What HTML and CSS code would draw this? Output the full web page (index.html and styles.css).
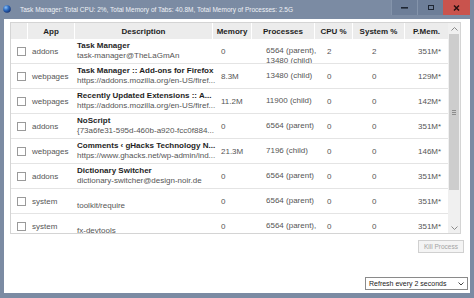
FILE: index.html
```html
<!DOCTYPE html>
<html>
<head>
<meta charset="utf-8">
<link rel="stylesheet" href="styles.css">
</head>
<body>
<div class="window">
  <div class="titlebar">
    <svg class="app-icon" width="8" height="8" viewBox="0 0 8 8">
      <defs>
        <radialGradient id="g" cx="35%" cy="30%" r="70%">
          <stop offset="0" stop-color="#8fc0f5"/>
          <stop offset="0.5" stop-color="#2f6fc4"/>
          <stop offset="1" stop-color="#16367a"/>
        </radialGradient>
      </defs>
      <circle cx="4" cy="4" r="3.8" fill="url(#g)"/>
    </svg>
    <span class="title">Task Manager: Total CPU: 2%, Total Memory of Tabs: 40.8M, Total Memory of Processes: 2.5G</span>
    <div class="controls">
      <div class="ctl"><svg width="7" height="2" viewBox="0 0 7 2"><rect x="0" y="0" width="7" height="1.6" fill="#1e2633"/></svg></div>
      <div class="ctl"><svg width="6" height="5" viewBox="0 0 6 5"><rect x="0.5" y="0.5" width="5" height="4" fill="none" stroke="#1e2633" stroke-width="1"/></svg></div>
      <div class="ctl close"><svg width="7" height="6" viewBox="0 0 7 6"><path d="M1 0.5 L6 5.5 M6 0.5 L1 5.5" stroke="#2a1010" stroke-width="1.5"/></svg></div>
    </div>
  </div>
  <div class="client">
    <div class="table">
      <div class="grid-area">
        <div class="head">
          <div class="hc"></div>
          <div class="hc">App</div>
          <div class="hc">Description</div>
          <div class="hc">Memory</div>
          <div class="hc">Processes</div>
          <div class="hc">CPU %</div>
          <div class="hc">System %</div>
          <div class="hc last">P.Mem.</div>
        </div>
        <div class="rows">
          <div class="row">
            <div class="c-chk"><span class="box"></span></div>
            <div class="c-app">addons</div>
            <div class="c-desc"><div class="t">Task Manager</div><div class="s">task-manager@TheLaGmAn</div></div>
            <div class="c-mem">0</div>
            <div class="c-proc"><div class="pin">6564 (parent),<br>13480 (child)</div></div>
            <div class="c-cpu">2</div>
            <div class="c-sys">2</div>
            <div class="c-pm">351M*</div>
          </div>
          <div class="row">
            <div class="c-chk"><span class="box"></span></div>
            <div class="c-app">webpages</div>
            <div class="c-desc"><div class="t">Task Manager :: Add-ons for Firefox</div><div class="s">https://addons.mozilla.org/en-US/firef...</div></div>
            <div class="c-mem">8.3M</div>
            <div class="c-proc"><div class="pin">13480 (child)</div></div>
            <div class="c-cpu">0</div>
            <div class="c-sys">0</div>
            <div class="c-pm">129M*</div>
          </div>
          <div class="row">
            <div class="c-chk"><span class="box"></span></div>
            <div class="c-app">webpages</div>
            <div class="c-desc"><div class="t">Recently Updated Extensions :: A...</div><div class="s">https://addons.mozilla.org/en-US/firef...</div></div>
            <div class="c-mem">11.2M</div>
            <div class="c-proc"><div class="pin">11900 (child)</div></div>
            <div class="c-cpu">0</div>
            <div class="c-sys">0</div>
            <div class="c-pm">142M*</div>
          </div>
          <div class="row">
            <div class="c-chk"><span class="box"></span></div>
            <div class="c-app">addons</div>
            <div class="c-desc"><div class="t">NoScript</div><div class="s">{73a6fe31-595d-460b-a920-fcc0f884...</div></div>
            <div class="c-mem">0</div>
            <div class="c-proc"><div class="pin">6564 (parent)</div></div>
            <div class="c-cpu">0</div>
            <div class="c-sys">0</div>
            <div class="c-pm">351M*</div>
          </div>
          <div class="row">
            <div class="c-chk"><span class="box"></span></div>
            <div class="c-app">webpages</div>
            <div class="c-desc"><div class="t">Comments ‹ gHacks Technology N...</div><div class="s">https://www.ghacks.net/wp-admin/ind...</div></div>
            <div class="c-mem">21.3M</div>
            <div class="c-proc"><div class="pin">7196 (child)</div></div>
            <div class="c-cpu">0</div>
            <div class="c-sys">0</div>
            <div class="c-pm">146M*</div>
          </div>
          <div class="row">
            <div class="c-chk"><span class="box"></span></div>
            <div class="c-app">addons</div>
            <div class="c-desc"><div class="t">Dictionary Switcher</div><div class="s">dictionary-switcher@design-noir.de</div></div>
            <div class="c-mem">0</div>
            <div class="c-proc"><div class="pin">6564 (parent)</div></div>
            <div class="c-cpu">0</div>
            <div class="c-sys">0</div>
            <div class="c-pm">351M*</div>
          </div>
          <div class="row">
            <div class="c-chk"><span class="box"></span></div>
            <div class="c-app">system</div>
            <div class="c-desc"><div class="t"></div><div class="s">toolkit/require</div></div>
            <div class="c-mem">0</div>
            <div class="c-proc"><div class="pin">6564 (parent)</div></div>
            <div class="c-cpu">0</div>
            <div class="c-sys">0</div>
            <div class="c-pm">351M*</div>
          </div>
          <div class="row">
            <div class="c-chk"><span class="box"></span></div>
            <div class="c-app">system</div>
            <div class="c-desc"><div class="t"></div><div class="s">fx-devtools</div></div>
            <div class="c-mem">0</div>
            <div class="c-proc"><div class="pin">6564 (parent),<br>13480 (child)</div></div>
            <div class="c-cpu">0</div>
            <div class="c-sys">0</div>
            <div class="c-pm">351M*</div>
          </div>
        </div>
      </div>
      <div class="scrollbar">
        <div class="arrow"><svg width="7" height="4" viewBox="0 0 7 4"><path d="M0.5 3.5 L3.5 0.5 L6.5 3.5" fill="none" stroke="#8a8a8a" stroke-width="1"/></svg></div>
        <div class="track">
          <div class="thumb"><span class="grip"></span><span class="grip"></span><span class="grip"></span></div>
        </div>
        <div class="arrow"><svg width="7" height="4" viewBox="0 0 7 4"><path d="M0.5 0.5 L3.5 3.5 L6.5 0.5" fill="none" stroke="#8a8a8a" stroke-width="1"/></svg></div>
      </div>
    </div>
    <div class="actions"><button class="kill" disabled>Kill Process</button></div>
    <div class="footer">
      <div class="select"><span>Refresh every 2 seconds</span><svg width="6" height="4" viewBox="0 0 6 4"><path d="M0.5 0.5 L3 3 L5.5 0.5" fill="none" stroke="#444" stroke-width="1"/></svg></div>
    </div>
  </div>
</div>
</body>
</html>
```

FILE: styles.css
```css
html, body {
  margin: 0;
  padding: 0;
}
body {
  width: 474px;
  height: 298px;
  overflow: hidden;
  background: #7b8ba3;
  font-family: "Liberation Sans", Arial, sans-serif;
}
.window {
  display: flex;
  flex-direction: column;
  height: 298px;
}
.titlebar {
  height: 19px;
  display: flex;
  align-items: flex-start;
  flex-shrink: 0;
}
.app-icon {
  margin: 5px 0 0 3px;
  flex-shrink: 0;
}
.title {
  margin-left: 9px;
  font-size: 6.5px;
  line-height: 19px;
  color: #eef1f6;
  white-space: nowrap;
}
.controls {
  margin-left: auto;
  margin-right: 4px;
  display: flex;
  height: 15px;
}
.ctl {
  width: 25px;
  height: 15px;
  background: #6d7e98;
  display: flex;
  align-items: center;
  justify-content: center;
  border-left: 1px solid #8494ab;
}
.ctl.close {
  width: 27px;
  background: #c9534d;
  border-left: none;
}
.client {
  flex: 1;
  margin: 0 4px 5px 4px;
  background: #ffffff;
  display: flex;
  flex-direction: column;
  padding: 3px 0 0 6px;
}
.table {
  width: 449px;
  height: 210px;
  border: 1px solid #d4d4d4;
  display: flex;
}
.grid-area {
  width: 437px;
  overflow: hidden;
}
.head, .row {
  display: grid;
  grid-template-columns: 17px 47px 138px 39px 63px 38px 52px 43px;
}
.head {
  height: 16px;
  background: #ececec;
}
.hc {
  font-size: 8px;
  font-weight: bold;
  color: #1e1e1e;
  text-align: center;
  line-height: 17px;
  border-right: 1px solid #ffffff;
  white-space: nowrap;
}
.hc.last {
  border-right: none;
}
.row {
  height: 24px;
  border-bottom: 1px solid #e4e4e4;
  align-items: center;
  overflow: hidden;
  font-size: 8px;
  color: #555555;
  white-space: nowrap;
}
.c-chk {
  padding-left: 6px;
  display: flex;
  align-items: center;
}
.box {
  width: 7px;
  height: 7px;
  border: 1px solid #9a9a9a;
  background: #fff;
  display: block;
}
.c-app {
  padding-left: 4px;
}
.c-desc {
  padding-left: 2px;
  line-height: 10px;
}
.c-desc .t {
  height: 10px;
  font-weight: bold;
  color: #1e1e1e;
}
.c-desc .s {
  height: 10px;
  color: #555555;
}
.c-mem {
  padding-left: 8px;
}
.c-proc {
  padding-left: 14px;
}
.pin {
  height: 10px;
  line-height: 10px;
  margin-top: -1px;
}
.c-cpu {
  padding-left: 12px;
}
.c-sys {
  padding-left: 19px;
}
.c-pm {
  padding-left: 13px;
}
.scrollbar {
  width: 12px;
  background: #f0f0f0;
  display: flex;
  flex-direction: column;
}
.arrow {
  height: 11px;
  display: flex;
  align-items: center;
  justify-content: center;
}
.track {
  flex: 1;
  padding: 0 1px;
}
.thumb {
  height: 156px;
  background: #cdcdcd;
  display: flex;
  flex-direction: column;
  align-items: center;
  justify-content: center;
  gap: 1px;
}
.grip {
  width: 4px;
  height: 1px;
  background: #8d8d8d;
  display: block;
}
.actions {
  display: flex;
  justify-content: flex-end;
  padding-right: 6px;
  margin-top: 6px;
}
.kill {
  width: 46px;
  height: 13px;
  padding: 0;
  border: 1px solid #d0d0d0;
  background: #f4f4f4;
  color: #a3a3a3;
  font-family: "Liberation Sans", Arial, sans-serif;
  font-size: 6.5px;
  line-height: 11px;
}
.footer {
  margin-top: auto;
  display: flex;
  justify-content: flex-end;
  padding: 0 2px 3px 0;
}
.select {
  width: 95px;
  height: 11px;
  border: 1px solid #8a8a8a;
  display: flex;
  align-items: center;
  justify-content: space-between;
  padding: 0 3px 0 3px;
  box-sizing: content-box;
  font-size: 7px;
  color: #1a1a1a;
}
.select span {
  line-height: 11px;
}
```
